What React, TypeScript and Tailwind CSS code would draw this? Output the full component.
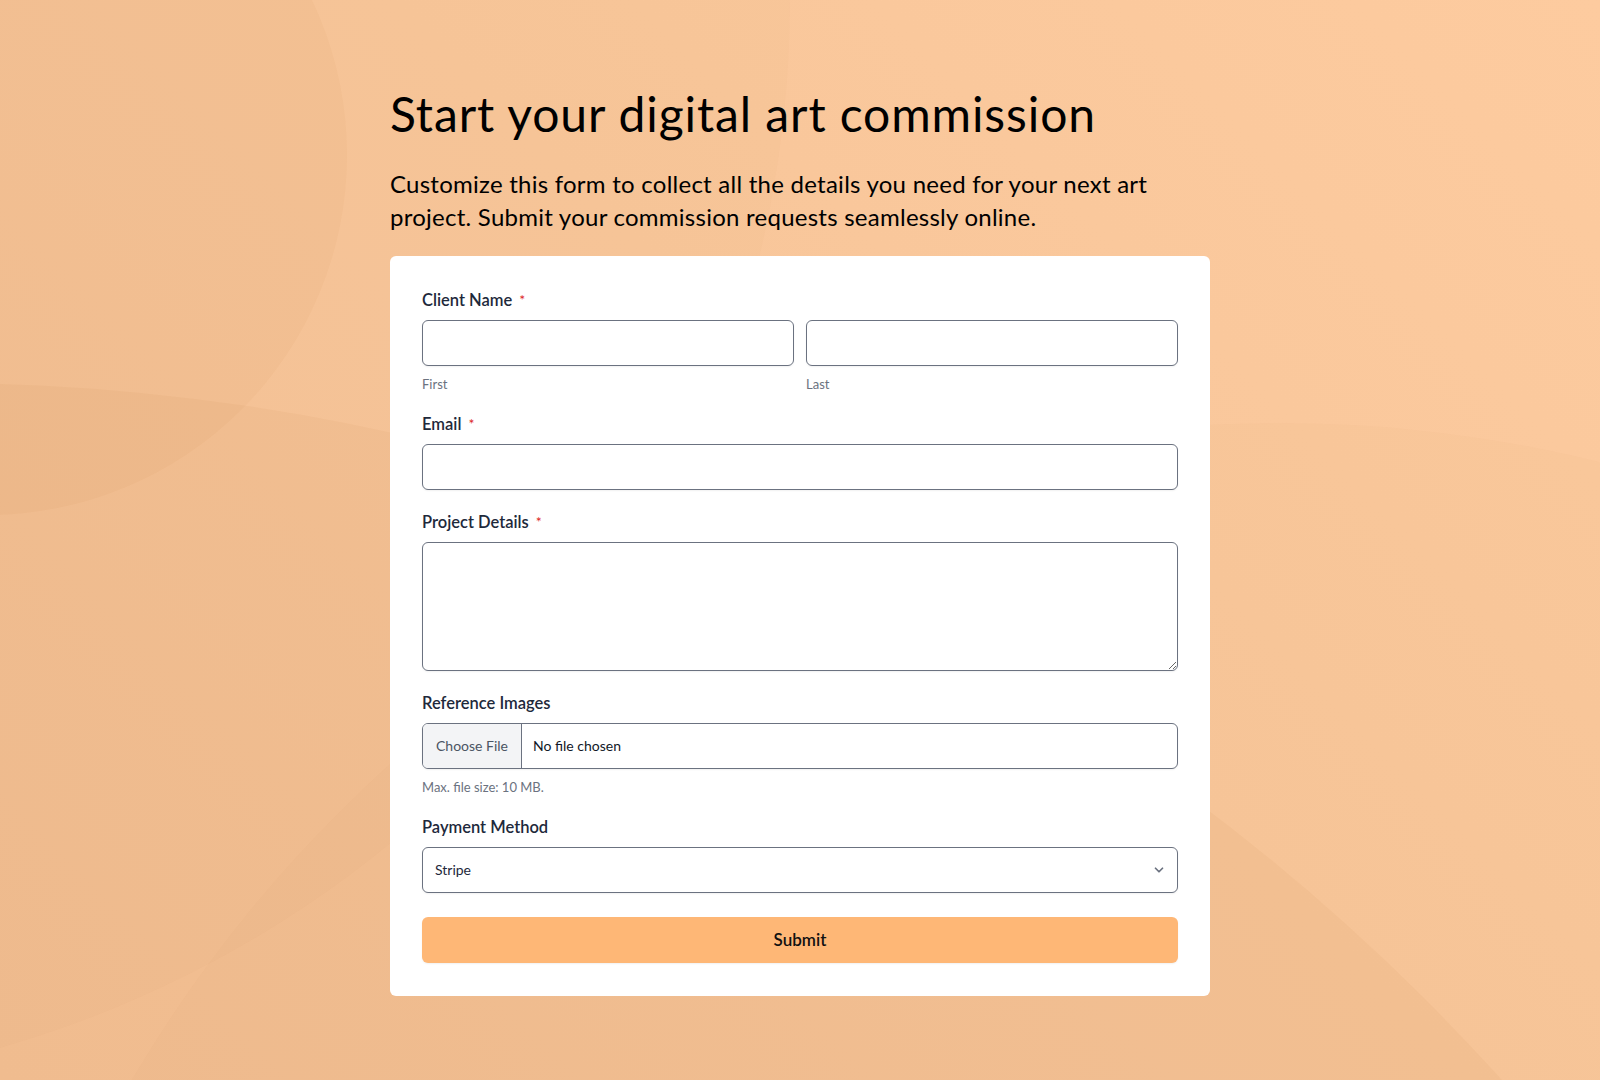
import React from "react";
import { ChevronDown } from "lucide-react";

function Label({ text, required }: { text: string; required?: boolean }) {
  return (
    <div className="flex items-center h-6 mb-2 text-[16.5px] leading-6 font-semibold text-[#1e293b]">
      <span>{text}</span>
      {required && <span className="ml-[7px] text-[14px] leading-6 font-normal text-[#dc2626]">*</span>}
    </div>
  );
}

const inputCls =
  "block w-full h-[46px] rounded-[6px] border border-[#6b7280] bg-white px-3 text-[14px] text-[#1e293b] shadow-[0_1px_2px_rgba(0,0,0,0.06)] outline-none";

export default function App() {
  return (
    <div
      className="relative min-h-screen w-full overflow-hidden bg-[linear-gradient(225deg,#fdcb9f_0%,#f8c69a_45%,#f4c195_100%)]"
      style={{ fontFamily: "Lato, 'Noto Sans', sans-serif" }}
    >
      {/* background decorative shapes */}
      <div className="pointer-events-none absolute left-[-1390px] top-[-1090px] h-[2180px] w-[2180px] rounded-full bg-[rgba(170,90,30,0.02)]" />
      <div className="pointer-events-none absolute left-[-373px] top-[-205px] h-[720px] w-[720px] rounded-full bg-[rgba(170,90,30,0.04)]" />
      <div className="pointer-events-none absolute left-[-52px] top-[423px] h-[2664px] w-[2664px] rounded-full bg-[rgba(170,90,30,0.02)]" />
      <div className="pointer-events-none absolute left-[-2168px] top-[383px] h-[4210px] w-[4210px] rounded-full bg-[rgba(170,90,30,0.045)]" />

      <div className="relative mx-auto w-[820px] pt-[85px] pb-[83px]">
        <h1 className="text-[48px] leading-[1.2] font-normal text-black tracking-[0.9px] mb-6">
          Start your digital art commission
        </h1>
        <p className="text-[24px] leading-[33px] text-black tracking-[0.25px] mb-[23px]">
          Customize this form to collect all the details you need for your next art project. Submit your commission
          requests seamlessly online.
        </p>

        <div className="rounded-[6px] bg-white px-8 pt-8 pb-[33px]">
          <div className="flex flex-col gap-5">
            <div>
              <Label text="Client Name" required />
              <div className="grid grid-cols-2 gap-3">
                <div>
                  <input className={inputCls} />
                  <div className="mt-[10px] text-[13px] leading-4 text-[#6b7280]">First</div>
                </div>
                <div>
                  <input className={inputCls} />
                  <div className="mt-[10px] text-[13px] leading-4 text-[#6b7280]">Last</div>
                </div>
              </div>
            </div>

            <div>
              <Label text="Email" required />
              <input className={inputCls} />
            </div>

            <div>
              <Label text="Project Details" required />
              <textarea className="block w-full h-[129px] rounded-[6px] border border-[#6b7280] bg-white px-3 py-2 text-[14px] text-[#1e293b] shadow-[0_1px_2px_rgba(0,0,0,0.06)] outline-none resize-y" />
            </div>

            <div>
              <Label text="Reference Images" />
              <div className="flex h-[46px] w-full overflow-hidden rounded-[6px] border border-[#6b7280] bg-white shadow-[0_1px_2px_rgba(0,0,0,0.06)]">
                <div className="flex w-[99px] items-center justify-center border-r border-[#6b7280] bg-[#f3f4f6] text-[14px] text-[#4b5563]">
                  Choose File
                </div>
                <div className="flex items-center pl-[11px] text-[14px] text-[#111827]">No file chosen</div>
              </div>
              <div className="mt-[10px] text-[13px] leading-4 text-[#6b7280]">Max. file size: 10 MB.</div>
            </div>

            <div>
              <Label text="Payment Method" />
              <div className="flex h-[46px] w-full items-center justify-between rounded-[6px] border border-[#6b7280] bg-white pl-3 pr-[11px] shadow-[0_1px_2px_rgba(0,0,0,0.06)]">
                <span className="text-[14px] text-[#1e293b]">Stripe</span>
                <ChevronDown size={14} strokeWidth={3} className="text-[#6b7280]" />
              </div>
            </div>
          </div>

          <button className="mt-[24px] flex h-[46px] w-full items-center justify-center rounded-[6px] bg-[#feb776] text-[17px] font-semibold text-[#111] shadow-[0_1px_2px_rgba(0,0,0,0.06)]">
            Submit
          </button>
        </div>
      </div>
    </div>
  );
}
